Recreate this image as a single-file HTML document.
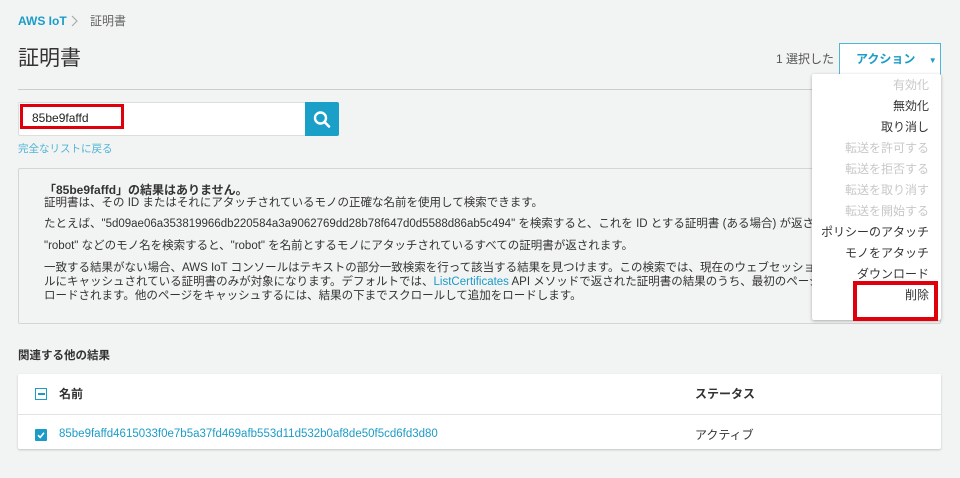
<!DOCTYPE html>
<html><head><meta charset="utf-8"><style>
*{box-sizing:border-box;margin:0;padding:0}
body{width:960px;height:478px;background:#f2f3f3;font-family:"Liberation Sans","Noto Sans CJK JP",sans-serif;color:#333;position:relative;overflow:hidden;font-size:12px;line-height:1.2}
.a{position:absolute;white-space:nowrap}
.link{color:#1b9cc8}
.info{left:18px;top:168px;width:923px;height:156px;border:1px solid #d5d5d5;background:#f2f3f3;border-radius:2px}
.info p{position:absolute;left:25px;white-space:nowrap;font-size:11.5px;color:#333}
.menu{left:812px;top:74px;width:129px;height:246px;background:#fff;box-shadow:0 1px 3px rgba(0,0,0,.3);border-radius:2px}
.menu div{position:absolute;right:12px;font-size:12px;white-space:nowrap}
.dis{color:#c8c8c8}
</style></head><body>
<div class="a link" style="left:18px;top:14px;font-size:12px;font-weight:bold">AWS IoT</div>
<svg class="a" style="left:70px;top:14px" width="10" height="14"><path d="M2 2L7 7L2 12" fill="none" stroke="#aaa" stroke-width="1.2"/></svg>
<div class="a" style="left:90px;top:14px;color:#666;font-size:12px">証明書</div>
<div class="a" style="left:18px;top:46px;font-size:21px;color:#333">証明書</div>
<div class="a" style="left:18px;top:89px;width:923px;height:1px;background:#ccc"></div>
<div class="a" style="left:776px;top:52px;font-size:12px;color:#555">1 選択した</div>
<div class="a" style="left:839px;top:43px;width:102px;height:32px;border:1px solid #4fb5d6;background:#fff;color:#1b9cc8;font-weight:bold;font-size:12px;padding:8px 0 0 16px">アクション <span style="font-size:8px;margin-left:10px">▼</span></div>

<div class="a" style="left:18px;top:102px;width:288px;height:34px;background:#fff;border:1px solid #ddd;border-radius:2px 0 0 2px"></div>
<div class="a" style="left:20px;top:104px;width:104px;height:25px;border:3px solid #e0000b;font-size:12px;padding:4px 0 0 9px;color:#222">85be9faffd</div>
<div class="a" style="left:305px;top:102px;width:34px;height:34px;background:#1a9fc9;border-radius:0 2px 2px 0">
<svg width="34" height="34"><circle cx="15.5" cy="16" r="5.5" fill="none" stroke="#fff" stroke-width="2.4"/><line x1="19.5" y1="20" x2="24" y2="24.5" stroke="#fff" stroke-width="2.6" stroke-linecap="round"/></svg></div>
<div class="a link" style="left:18px;top:143px;font-size:10.5px;color:#4fb5d6">完全なリストに戻る</div>

<div class="a info">
<p style="top:14px;font-weight:bold;font-size:12px">「85be9faffd」の結果はありません。</p>
<p style="top:28px">証明書は、その ID またはそれにアタッチされているモノの正確な名前を使用して検索できます。</p>
<p style="top:49px">たとえば、"5d09ae06a353819966db220584a3a9062769dd28b78f647d0d5588d86ab5c494" を検索すると、これを ID とする証明書 (ある場合) が返されます。</p>
<p style="top:71px">"robot" などのモノ名を検索すると、"robot" を名前とするモノにアタッチされているすべての証明書が返されます。</p>
<p style="top:93px">一致する結果がない場合、AWS IoT コンソールはテキストの部分一致検索を行って該当する結果を見つけます。この検索では、現在のウェブセッションでローカ</p>
<p style="top:107px">ルにキャッシュされている証明書のみが対象になります。デフォルトでは、<span class="link">ListCertificates</span> API メソッドで返された証明書の結果のうち、最初のページのみ</p>
<p style="top:121px">ロードされます。他のページをキャッシュするには、結果の下までスクロールして追加をロードします。</p>
</div>

<div class="a menu">
<div class="dis" style="top:4px">有効化</div>
<div style="top:25px">無効化</div>
<div style="top:46px">取り消し</div>
<div class="dis" style="top:67px">転送を許可する</div>
<div class="dis" style="top:88px">転送を拒否する</div>
<div class="dis" style="top:109px">転送を取り消す</div>
<div class="dis" style="top:130px">転送を開始する</div>
<div style="top:151px">ポリシーのアタッチ</div>
<div style="top:172px">モノをアタッチ</div>
<div style="top:193px">ダウンロード</div>
<div style="top:214px">削除</div>
</div>
<div class="a" style="left:853px;top:281px;width:85px;height:40px;border:4px solid #e0000b"></div>

<div class="a" style="left:18px;top:350px;font-size:11.5px;font-weight:bold">関連する他の結果</div>
<div class="a" style="left:18px;top:374px;width:923px;height:75px;background:#fff;box-shadow:0 1px 2px rgba(0,0,0,.2);border-radius:2px"></div>
<div class="a" style="left:18px;top:414px;width:923px;height:1px;background:#e3e3e3"></div>
<div class="a" style="left:35px;top:388px;width:12px;height:12px;border:1.5px solid #1b9cc8;background:#fff"><div style="margin:3.5px 1.5px;height:2px;background:#1b9cc8"></div></div>
<div class="a" style="left:59px;top:387px;font-weight:bold;font-size:12px">名前</div>
<div class="a" style="left:695px;top:387px;font-weight:bold;font-size:12px">ステータス</div>
<div class="a" style="left:35px;top:429px;width:12px;height:12px;background:#1b9cc8;border-radius:1px"><svg width="12" height="12"><path d="M3 6.2L5.2 8.4L9 3.8" fill="none" stroke="#fff" stroke-width="1.6"/></svg></div>
<div class="a link" style="left:59px;top:428px;font-size:11.5px">85be9faffd4615033f0e7b5a37fd469afb553d11d532b0af8de50f5cd6fd3d80</div>
<div class="a" style="left:695px;top:428px;font-size:12px">アクティブ</div>
</body></html>
